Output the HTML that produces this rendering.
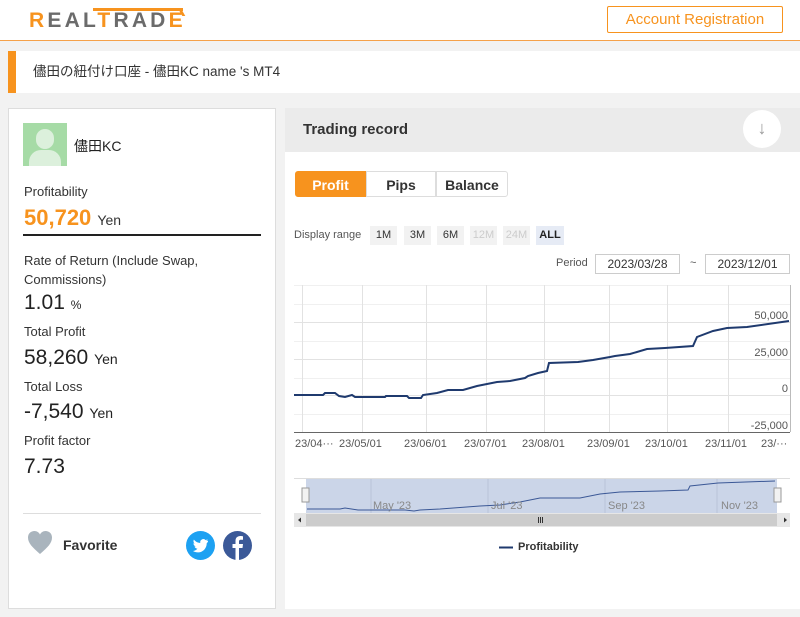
<!DOCTYPE html>
<html><head><meta charset="utf-8"><style>
*{margin:0;padding:0;box-sizing:border-box}
body{width:800px;height:617px;background:#f2f2f2;font-family:"Liberation Sans","Noto Sans CJK JP",sans-serif;position:relative;overflow:hidden;color:#333}
.a{position:absolute}
.hdr{left:0;top:0;width:800px;height:41px;background:#fff;border-bottom:1px solid #f5a14a}
.btn{left:607px;top:6px;width:176px;height:27px;border:1px solid #f7931e;color:#f7931e;font-size:15px;text-align:center;line-height:25px;border-radius:2px;background:#fff}
.title{left:8px;top:51px;width:792px;height:42px;background:#fff;border-left:8px solid #f7931e;font-size:13.5px;line-height:42px;padding-left:17px;color:#333}
.card{left:8px;top:108px;width:268px;height:501px;background:#fff;border:1px solid #ddd}
.lbl{font-size:13px;color:#333}
.big{font-size:21px;color:#222}
.sm{font-size:14px}
.rp{left:285px;top:108px;width:515px;height:501px;background:#fff}
.tab{top:171px;height:26px;font-size:14px;font-weight:bold;text-align:center;line-height:26px;border:1px solid #ddd;color:#333}
.rb{top:226px;height:19px;width:27px;font-size:11px;background:#f2f2f2;text-align:center;line-height:19px;color:#333}
.in{top:254px;height:20px;width:85px;border:1px solid #ccc;font-size:12px;text-align:center;line-height:18px}
.xl{top:438px;font-size:11px;color:#555}
.yl{font-size:11px;color:#555;right:12px}
</style></head><body>
<div class="a hdr"></div>
<div class="a" style="left:29px;top:10px;font-size:21px;font-weight:bold;letter-spacing:3.2px;color:#6b6b6b;line-height:22px"><span style="color:#f7931e">R</span>EAL<span style="color:#f7931e">T</span>RAD<span style="color:#f7931e">E</span></div>
<div class="a" style="left:93px;top:8px;width:90px;height:3px;background:#f7931e"></div>
<div class="a" style="left:180px;top:8px;width:3px;height:8px;background:#f7931e;transform:skewX(30deg)"></div>
<div class="a btn">Account Registration</div>
<div class="a title">儘田の紐付け口座 - 儘田KC name 's MT4</div>

<div class="a card"></div>
<div class="a" style="left:23px;top:123px;width:44px;height:43px;background:#a6dba6;overflow:hidden"><div class="a" style="left:13px;top:6px;width:18px;height:20px;border-radius:9px;background:#dcf0dc"></div><div class="a" style="left:6px;top:27px;width:32px;height:20px;border-radius:12px 12px 0 0;background:#dcf0dc"></div></div>
<div class="a sm" style="left:74px;top:136px;color:#222">儘田KC</div>
<div class="a lbl" style="left:24px;top:184px">Profitability</div>
<div class="a" style="left:24px;top:205px;font-size:22px;font-weight:bold;color:#f7931e">50,720 <span style="font-size:14px;color:#333;font-weight:normal">Yen</span></div>
<div class="a" style="left:23px;top:234px;width:238px;height:2px;background:#222"></div>
<div class="a lbl" style="left:24px;top:251px;line-height:19px">Rate of Return (Include Swap,<br>Commissions)</div>
<div class="a big" style="left:24px;top:291px">1.01 <span style="font-size:12px">%</span></div>
<div class="a lbl" style="left:24px;top:324px">Total Profit</div>
<div class="a big" style="left:24px;top:346px">58,260 <span style="font-size:14px">Yen</span></div>
<div class="a lbl" style="left:24px;top:379px">Total Loss</div>
<div class="a big" style="left:24px;top:400px">-7,540 <span style="font-size:14px">Yen</span></div>
<div class="a lbl" style="left:24px;top:433px">Profit factor</div>
<div class="a big" style="left:24px;top:455px">7.73</div>
<div class="a" style="left:23px;top:513px;width:238px;height:1px;background:#ddd"></div>
<svg class="a" style="left:27px;top:530px" width="26" height="25" viewBox="0 0 26 25"><path d="M13 24C5 17 1 13 1 7.5 1 3.5 4 1 7.5 1 10 1 12 2.5 13 4.5 14 2.5 16 1 18.5 1 22 1 25 3.5 25 7.5 25 13 21 17 13 24Z" fill="#a9b4bd"/></svg>
<div class="a" style="left:63px;top:537px;font-size:14px;font-weight:bold;color:#333">Favorite</div>
<svg class="a" style="left:186px;top:531px" width="29" height="29" viewBox="0 0 29 29"><circle cx="14.5" cy="14.5" r="14.5" fill="#1da1f2"/><path d="M22 9.5c-.6.3-1.2.4-1.8.5.7-.4 1.1-1 1.4-1.7-.6.4-1.3.6-2 .8a3.1 3.1 0 0 0-5.3 2.8c-2.6-.1-4.9-1.4-6.4-3.3-.8 1.4-.4 3.2.9 4.1-.5 0-1-.2-1.4-.4 0 1.5 1.1 2.800 2.500 3.100-.5.1-.9.2-1.400.1.4 1.2 1.500 2.100 2.900 2.100A6.300 6.300 0 0 1 7 20c1.400.9 3 1.400 4.800 1.400 5.800 0 9-4.900 8.900-9.200.6-.5 1.100-1 1.300-1.700z" fill="#fff"/></svg>
<svg class="a" style="left:223px;top:531px" width="29" height="29" viewBox="0 0 29 29"><circle cx="14.5" cy="14.5" r="14.5" fill="#3b5998"/><path d="M16 29V17h3.5l.5-4h-4v-2.3c0-1.100.4-1.900 2-1.900h2V5.300C19.500 5.200 18.500 5 17.300 5 14.500 5 12.500 6.700 12.500 9.800V13H9.500v4h3v12z" fill="#fff"/></svg>

<div class="a rp"></div>
<div class="a" style="left:285px;top:108px;width:515px;height:44px;background:#ebebeb"></div>
<div class="a" style="left:303px;top:121px;font-size:15px;font-weight:bold;color:#333">Trading record</div>
<div class="a" style="left:743px;top:110px;width:38px;height:38px;border-radius:19px;background:#fff;color:#999;font-size:18px;text-align:center;line-height:36px">↓</div>
<div class="a tab" style="left:295px;width:71px;background:#f7931e;color:#fff;border-color:#f7931e;border-radius:3px 0 0 3px">Profit</div>
<div class="a tab" style="left:366px;width:70px">Pips</div>
<div class="a tab" style="left:436px;width:72px;border-radius:0 3px 3px 0">Balance</div>
<div class="a" style="left:294px;top:229px;font-size:11px;color:#555">Display range</div>
<div class="a rb" style="left:370px">1M</div><div class="a rb" style="left:404px">3M</div><div class="a rb" style="left:437px">6M</div>
<div class="a rb" style="left:470px;color:#ccc">12M</div><div class="a rb" style="left:503px;color:#ccc">24M</div>
<div class="a rb" style="left:536px;width:28px;background:#e6ebf5;font-weight:bold;color:#222">ALL</div>
<div class="a" style="left:556px;top:257px;font-size:11px;color:#555">Period</div>
<div class="a in" style="left:595px">2023/03/28</div>
<div class="a" style="left:690px;top:257px;font-size:11px;color:#555">~</div>
<div class="a in" style="left:705px">2023/12/01</div>

<svg class="a" style="left:0;top:0" width="800" height="617">
<g stroke="#f0f0f0" stroke-width="1">
<line x1="294" y1="285.5" x2="790" y2="285.5"/><line x1="294" y1="304.5" x2="790" y2="304.5"/><line x1="294" y1="341.5" x2="790" y2="341.5"/><line x1="294" y1="378.5" x2="790" y2="378.5"/><line x1="294" y1="414.5" x2="790" y2="414.5"/>
</g>
<g stroke="#e2e2e2" stroke-width="1">
<line x1="294" y1="322.5" x2="790" y2="322.5"/><line x1="294" y1="359.5" x2="790" y2="359.5"/><line x1="294" y1="395.5" x2="790" y2="395.5"/>
<line x1="302.5" y1="285" x2="302.5" y2="432"/><line x1="362.5" y1="285" x2="362.5" y2="432"/><line x1="426.5" y1="285" x2="426.5" y2="432"/><line x1="486.5" y1="285" x2="486.5" y2="432"/><line x1="544.5" y1="285" x2="544.5" y2="432"/><line x1="609.5" y1="285" x2="609.5" y2="432"/><line x1="667.5" y1="285" x2="667.5" y2="432"/><line x1="728.5" y1="285" x2="728.5" y2="432"/>
</g>
<line x1="294" y1="432.5" x2="790" y2="432.5" stroke="#666"/>
<line x1="790.5" y1="285" x2="790.5" y2="432" stroke="#bbb"/>
<polyline fill="none" stroke="#1f3a6e" stroke-width="2" points="294,395 323,395 325,393 335,393 339,396 345,397 352,395 355,397 385,397 386,396 407,396 409,398 421,398 423,395 437,393 448,390 463,390 477,386 497,382 510,381 525,378 528,376 538,373 547,371 549,363 578,362 593,360 610,357 615,356 630,354 647,349 665,348 693,346 697,337 713,331 727,328 747,327 789,321"/>
<rect x="294" y="478" width="496" height="35" fill="#fff"/>
<rect x="306" y="478" width="471" height="35" fill="#cbd5e8"/>
<g stroke="#b9c3d8"><line x1="371" y1="478" x2="371" y2="513"/><line x1="488" y1="478" x2="488" y2="513"/><line x1="605" y1="478" x2="605" y2="513"/><line x1="717" y1="478" x2="717" y2="513"/></g>
<line x1="294" y1="478.5" x2="790" y2="478.5" stroke="#ddd"/>
<polyline fill="none" stroke="#3b5896" stroke-width="1" points="307,509 340,509 345,508 358,510 365,510 385,510 405,510 414,511 420,510 440,509 480,506 500,505 520,502 540,498 580,498 600,494 620,492 660,491 688,490 690,486 718,483 775,481"/>
<rect x="294" y="513" width="496" height="14" fill="#e6e6e6"/>
<rect x="306" y="514" width="471" height="12" fill="#ccc"/>
<rect x="302" y="488" width="7" height="14" fill="#f2f2f2" stroke="#999"/>
<rect x="774" y="488" width="7" height="14" fill="#f2f2f2" stroke="#999"/>
<path d="M298 520l3-2.500v5z" fill="#333"/><path d="M787 520l-3-2.500v5z" fill="#333"/>
<g stroke="#333"><line x1="538.5" y1="517" x2="538.5" y2="523"/><line x1="540.5" y1="517" x2="540.5" y2="523"/><line x1="542.5" y1="517" x2="542.5" y2="523"/></g>
<line x1="499" y1="547.5" x2="513" y2="547.5" stroke="#1f3a6e" stroke-width="2"/>
</svg>
<div class="a yl" style="top:310px">50,000</div>
<div class="a yl" style="top:347px">25,000</div>
<div class="a yl" style="top:383px">0</div>
<div class="a yl" style="top:420px">-25,000</div>
<div class="a xl" style="left:295px">23/04···</div>
<div class="a xl" style="left:339px">23/05/01</div>
<div class="a xl" style="left:404px">23/06/01</div>
<div class="a xl" style="left:464px">23/07/01</div>
<div class="a xl" style="left:522px">23/08/01</div>
<div class="a xl" style="left:587px">23/09/01</div>
<div class="a xl" style="left:645px">23/10/01</div>
<div class="a xl" style="left:705px">23/11/01</div>
<div class="a xl" style="left:761px">23/···</div>
<div class="a" style="left:373px;top:500px;font-size:11px;color:#888">May '23</div>
<div class="a" style="left:491px;top:500px;font-size:11px;color:#888">Jul '23</div>
<div class="a" style="left:608px;top:500px;font-size:11px;color:#888">Sep '23</div>
<div class="a" style="left:721px;top:500px;font-size:11px;color:#888">Nov '23</div>
<div class="a" style="left:518px;top:541px;font-size:11px;font-weight:bold;color:#333">Profitability</div>
</body></html>
